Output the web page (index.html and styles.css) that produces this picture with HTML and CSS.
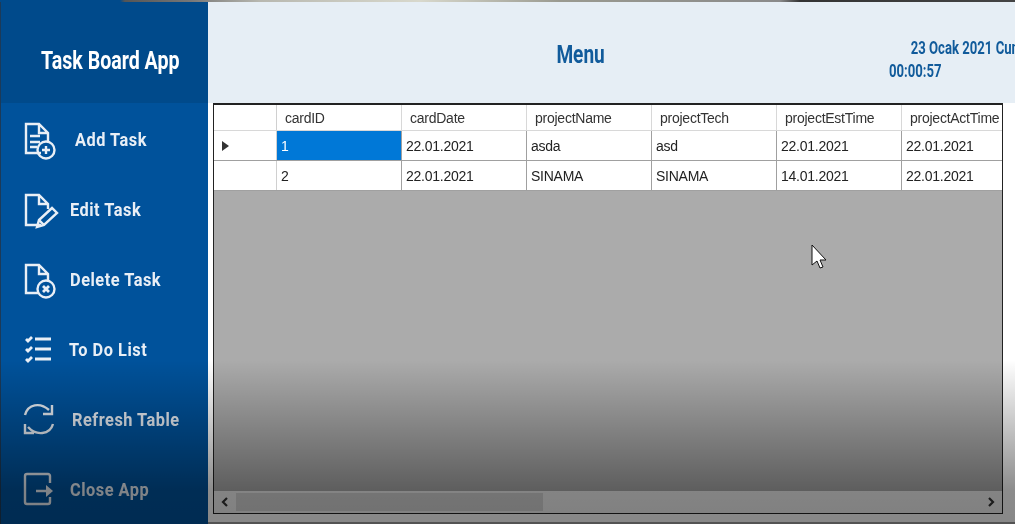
FILE: index.html
```html
<!DOCTYPE html>
<html lang="tr">
<head>
<meta charset="utf-8">
<title>Task Board App</title>
<link rel="stylesheet" href="styles.css">
</head>
<body>
<div class="app">
  <aside class="sidebar">
    <div class="brand"><span class="narrow">Task Board App</span></div>
    <nav class="menu">
      <div class="item"><svg class="ico" viewBox="0 0 34 36"><path d="M17 32H2V3h13l9 9v8M15 3v9h9M6 15h10M6 21h10M6 26h7"/><circle cx="22" cy="29" r="8.5"/><path d="M22 25v8M18 29h8"/></svg><span class="lbl lbl-add">Add Task</span></div>
      <div class="item"><svg class="ico" viewBox="0 0 34 36"><path d="M17 34H2V4h13l9 9v5M15 4v9h9"/><path d="M13 36l2-7L28 17l5 5-13 12zM15 29l5 5"/></svg><span class="lbl lbl-edit">Edit Task</span></div>
      <div class="item"><svg class="ico" viewBox="0 0 34 36"><path d="M14 32H2V4h13l9 9v6M15 4v9h9"/><circle cx="22" cy="28" r="8.5"/><path class="bold" d="M19 25l6 6M25 25l-6 6"/></svg><span class="lbl lbl-edit">Delete Task</span></div>
      <div class="item"><svg class="ico" viewBox="0 0 34 36"><path class="bold" d="M2 8l2 2 4-4M2 18l2 2 4-4M2 28l2 2 4-4"/><path class="bold" d="M11 8h16M11 18h16M11 28h16"/></svg><span class="lbl lbl-todo">To Do List</span></div>
      <div class="item"><svg class="ico" viewBox="0 0 34 36"><path d="M1 14C4 3 16 1 25 9M28 4v9h-9M29 23C26 34 12 35 4 26M1 23v9h9"/></svg><span class="lbl lbl-ref">Refresh Table</span></div>
      <div class="item"><svg class="ico" viewBox="0 0 34 36"><path d="M26 12V5a2 2 0 0 0-2-2H3a2 2 0 0 0-2 2v26a2 2 0 0 0 2 2h21a2 2 0 0 0 2-2v-5M12 20h10"/><path class="solid" d="M22 14l7 6-7 6z"/></svg><span class="lbl lbl-edit">Close App</span></div>
    </nav>
  </aside>
  <main class="main">
    <header class="topbar">
      <h1 class="title"><span class="narrow-c">Menu</span></h1>
      <div class="clock">
        <div class="date">23 Ocak 2021 Cumartesi</div>
        <div class="time">00:00:57</div>
      </div>
    </header>
    <section class="grid">
      <div class="row head">
        <div class="rowhead"></div>
        <div class="cell">cardID</div><div class="cell">cardDate</div><div class="cell">projectName</div><div class="cell">projectTech</div><div class="cell">projectEstTime</div><div class="cell">projectActTime</div>
      </div>
      <div class="row">
        <div class="rowhead"><span class="caret"></span></div>
        <div class="cell sel">1</div><div class="cell">22.01.2021</div><div class="cell">asda</div><div class="cell">asd</div><div class="cell">22.01.2021</div><div class="cell">22.01.2021</div>
      </div>
      <div class="row">
        <div class="rowhead"></div>
        <div class="cell">2</div><div class="cell">22.01.2021</div><div class="cell">SINAMA</div><div class="cell">SINAMA</div><div class="cell">14.01.2021</div><div class="cell">22.01.2021</div>
      </div>
      <div class="empty"></div>
      <div class="scrollbar">
        <svg class="arrow" viewBox="0 0 22 18"><path d="M13 5l-4 4 4 4"/></svg>
        <div class="track"><div class="thumb"></div></div>
        <svg class="arrow" viewBox="0 0 22 18"><path d="M9 5l4 4-4 4"/></svg>
      </div>
    </section>
  </main>
  <svg class="cursor" viewBox="0 0 16 26"><path d="M1 1v20l5-4 3 7 3-1-3-7h6z"/></svg>
  <div class="topstrip"></div>
  <div class="shade"></div>
</div>
</body>
</html>
```
FILE: styles.css
```css
* { box-sizing: border-box; }
html, body { margin: 0; height: 100%; overflow: hidden; }
.app {
  position: relative;
  display: flex;
  width: 1015px;
  height: 524px;
  overflow: hidden;
  background: #fff;
  font-family: "Liberation Sans", Arial, sans-serif;
  filter: blur(0.4px);
}
.sidebar { width: 208px; flex: none; background: #00529b; display: flex; flex-direction: column; border-left: 1px solid #1c3a58; }
.brand {
  height: 103px;
  background: #004a8b;
  color: #fff;
  font: bold 26.5px "Roboto", sans-serif;
  display: flex;
  align-items: center;
  padding: 15px 0 0 40px;
  white-space: nowrap;
}
.narrow { display: inline-block; transform: scaleX(.74); transform-origin: left center; }
.menu { display: flex; flex-direction: column; padding-top: 1px; }
.item { height: 70px; display: flex; align-items: center; padding-left: 23px; color: #e9eff6; }
.ico { width: 34px; height: 36px; flex: none; fill: none; stroke: currentColor; stroke-width: 2.4; overflow: visible; }
.ico .bold { stroke-width: 2.8; }
.ico .solid { fill: currentColor; stroke: none; }
.lbl {
  display: inline-block;
  font: bold 19px "Roboto", sans-serif;
  letter-spacing: .6px;
  white-space: nowrap;
  transform: scaleX(.86);
  transform-origin: left center;
}
.lbl-add { margin-left: 17px; }
.lbl-edit { margin-left: 12px; }
.lbl-todo { margin-left: 11px; }
.lbl-ref { margin-left: 14px; }
.main { flex: 1; min-width: 0; background: #fff; display: flex; flex-direction: column; border-bottom: 2px solid #9c9c9c; }
.topbar { position: relative; height: 103px; flex: none; background: #e6eef5; color: #115b9b; }
.title {
  margin: 0;
  padding-top: 38px;
  text-align: center;
  font: bold 26.5px "Roboto", sans-serif;
  width: 746px;
}
.narrow-c { display: inline-block; transform: scaleX(.72); }
.clock {
  position: absolute;
  left: 681px;
  top: 37px;
  font: bold 17.5px/23px "Roboto", sans-serif;
  white-space: nowrap;
  transform: scaleX(.75);
  transform-origin: left center;
}
.date { padding-left: 29px; }
.grid {
  width: 790px;
  height: 411px;
  margin-left: 5px;
  background: #ababab;
  border: 1px solid #222;
  border-top-width: 2px;
  display: flex;
  flex-direction: column;
  font-size: 14px;
  letter-spacing: -.25px;
  color: #222;
  overflow: hidden;
}
.row { display: flex; height: 30px; flex: none; background: #fff; border-bottom: 1px solid #a0a0a0; }
.row.head { height: 26px; border-bottom-color: #d8d8d8; color: #333; }
.rowhead { width: 63px; flex: none; display: flex; align-items: center; padding-left: 8px; border-right: 1px solid #d0d0d0; }
.cell { width: 125px; flex: none; padding: 7px 0 0 4px; white-space: nowrap; border-right: 1px solid #a0a0a0; }
.head .cell { padding: 5px 0 0 8px; border-right-color: #d8d8d8; }
.cell.sel { background: #0078d7; color: #fff; }
.caret { border-left: 7px solid #333; border-top: 5px solid transparent; border-bottom: 5px solid transparent; }
.empty { flex: 1; }
.scrollbar { height: 22px; flex: none; background: #f0f0f0; display: flex; align-items: center; }
.arrow { width: 22px; height: 18px; flex: none; fill: none; stroke: #333; stroke-width: 2.2; }
.track { flex: 1; height: 18px; }
.thumb { width: 307px; height: 100%; background: #d4d4d4; }
.cursor { position: absolute; left: 811px; top: 244px; width: 16px; height: 26px; fill: #fff; stroke: #111; stroke-width: 1; }
.topstrip {
  position: absolute;
  left: 0;
  right: 0;
  top: 0;
  height: 2px;
  background: linear-gradient(to right, #004a8b 0, #004a8b 120px, #555 125px, #777 190px, #b8b8b0 260px, #d8d8cc 420px, #9a9a90 560px, #8a8a8a 780px, #333 800px, #444 1015px);
}
.shade {
  position: absolute;
  inset: 0;
  pointer-events: none;
  background: linear-gradient(to bottom, rgba(0,0,0,0) 0, rgba(0,0,0,0) 360px, rgba(0,0,0,.45) 490px, rgba(0,0,0,.47) 524px);
}
```
